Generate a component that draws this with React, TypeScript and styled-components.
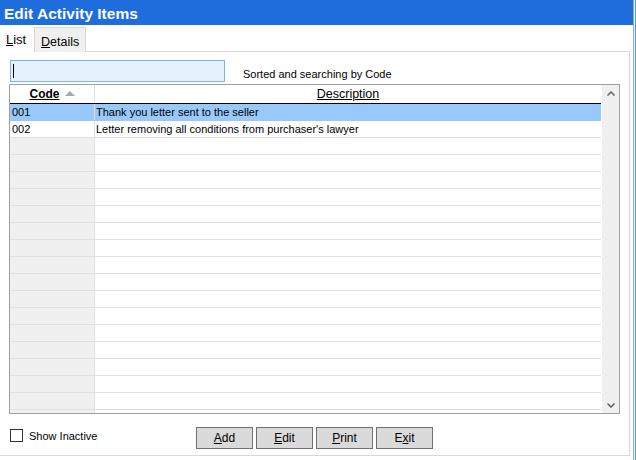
import React from "react";
import styled, { createGlobalStyle } from "styled-components";

type Item = { code: string; description: string };

const items: Item[] = [
  { code: "001", description: "Thank you letter sent to the seller" },
  { code: "002", description: "Letter removing all conditions from purchaser's lawyer" },
];

const TOTAL_ROWS = 19;

const Global = createGlobalStyle`
  html, body { margin: 0; padding: 0; background: #fff; }
  body { width: 636px; height: 460px; overflow: hidden; font-family: "Liberation Sans", Arial, sans-serif; }
`;

const Window = styled.div` display: flex; width: 636px; height: 460px; `;
const Main = styled.div` width: 633px; display: flex; flex-direction: column; `;
const Edge = styled.div`
  width: 3px; background: linear-gradient(to right, #a8a8a8 0, #a8a8a8 1px, #e8f4fc 1px, #e8f4fc 2px, #3aa6ee 2px);
`;

const TitleBar = styled.div`
  height: 25px; background: #1f6cdc; color: #fff; font-weight: bold; font-size: 15.5px;
  line-height: 27px; padding-left: 4px; white-space: nowrap;
`;

const Tabs = styled.div` display: flex; align-items: flex-end; height: 27px; width: 630px; `;
const Tab = styled.div<{ $active?: boolean }>`
  box-sizing: border-box;
  width: ${(p) => (p.$active ? "34px" : "52px")};
  height: ${(p) => (p.$active ? "27px" : "25px")};
  padding: ${(p) => (p.$active ? "7px 0 0 6px" : "7px 0 0 6px")};
  font-size: ${(p) => (p.$active ? "13px" : "12.5px")};
  background: ${(p) => (p.$active ? "#fff" : "#f0f0f0")};
  border: ${(p) => (p.$active ? "none" : "1px solid #d9d9d9")};
  border-bottom: none;
  color: #000;
  & u { text-decoration: underline; }
`;
const TabRest = styled.div` flex: 1; border-bottom: 1px solid #d9d9d9; `;

const Panel = styled.div`
  width: 630px; box-sizing: border-box; height: 404px;
  border-right: 1px solid #d9d9d9; border-bottom: 1px solid #d9d9d9;
  padding: 8px 9px 0 9px; display: flex; flex-direction: column;
`;

const SearchRow = styled.div` display: flex; align-items: flex-start; height: 24px; `;
const Search = styled.div`
  box-sizing: border-box; width: 215px; height: 22px; margin-left: 1px;
  background: #e5f1fb; border: 1px solid #7ab4ec; display: flex; align-items: center; padding-left: 2px;
`;
const Caret = styled.div` width: 1px; height: 14px; background: #000; `;
const SortedLabel = styled.div` font-size: 11px; margin: 8px 0 0 18px; color: #000; `;

const Grid = styled.div`
  box-sizing: border-box; height: 330px; border: 1px solid #a0a0a0; display: flex;
`;
const Body = styled.div` flex: 1; overflow: hidden; display: flex; flex-direction: column; `;
const HeaderRow = styled.div` display: flex; height: 18px; border-bottom: 1px solid #000; flex-shrink: 0; `;
const HeadCell = styled.div<{ $w?: number }>`
  ${(p) => (p.$w ? `width: ${p.$w}px; border-right: 1px solid #e0e0e0;` : "flex: 1;")}
  display: flex; align-items: center; justify-content: center; font-size: 12.5px; color: #000;
`;
const HeadText = styled.span<{ $bold?: boolean }>`
  text-decoration: underline; font-weight: ${(p) => (p.$bold ? "bold" : "normal")};
  font-size: ${(p) => (p.$bold ? "12px" : "12.5px")};
`;
const SortArrow = styled.span`
  width: 0; height: 0; margin-left: 5px; margin-top: -1px;
  border-left: 5px solid transparent; border-right: 5px solid transparent; border-bottom: 5px solid #a8a8a8;
`;

const Row = styled.div<{ $selected?: boolean }>`
  display: flex; height: 17px; box-sizing: border-box; flex-shrink: 0;
  border-bottom: 1px solid ${(p) => (p.$selected ? "#99c9fb" : "#e0e0e0")};
  background: ${(p) => (p.$selected ? "#99c9fb" : "#fff")};
  font-size: 11px; color: #000;
`;
const CodeCell = styled.div<{ $empty?: boolean; $selected?: boolean }>`
  width: 82px; padding-left: 2px; border-right: 1px solid #e0e0e0; line-height: 16px;
  background: ${(p) => (p.$selected ? "transparent" : p.$empty ? "#f0f0f0" : "#fff")};
`;
const DescCell = styled.div` flex: 1; padding-left: 1px; line-height: 16px; white-space: nowrap; `;

const Scrollbar = styled.div`
  width: 17px; background: #f0f0f0; border-left: 1px solid #fff; display: flex; flex-direction: column;
  justify-content: space-between; align-items: center; padding: 6px 0 5px;
`;

const Footer = styled.div`
  display: grid; grid-template-columns: 1fr auto 1fr; align-items: start; margin-top: 13px;
`;
const CheckWrap = styled.label` display: flex; align-items: center; font-size: 11px; padding-top: 2px; `;
const Box = styled.span`
  width: 11px; height: 11px; border: 1px solid #333; background: #fff; margin: 0 6px 0 1px;
`;
const Buttons = styled.div` display: flex; gap: 3px; `;
const Button = styled.button`
  box-sizing: border-box; width: 57px; height: 22px; background: #dadada; border: 1px solid #707070;
  font-family: "Liberation Sans", Arial, sans-serif; font-size: 12px; color: #000; padding: 0;
`;

function Chevron({ up }: { up?: boolean }) {
  return (
    <svg width="8" height="5" viewBox="0 0 8 5">
      <path d={up ? "M0.5 4.5 L4 1 L7.5 4.5" : "M0.5 0.5 L4 4 L7.5 0.5"} fill="none" stroke="#606060" strokeWidth="1.5" />
    </svg>
  );
}

function Accel({ text, at }: { text: string; at: number }) {
  return (
    <>
      {text.slice(0, at)}
      <u>{text[at]}</u>
      {text.slice(at + 1)}
    </>
  );
}

export default function App() {
  const rows = Array.from({ length: TOTAL_ROWS }, (_, i) => items[i] || null);
  return (
    <Window>
      <Global />
      <Main>
        <TitleBar>Edit Activity Items</TitleBar>
        <Tabs>
          <Tab $active><Accel text="List" at={0} /></Tab>
          <Tab><Accel text="Details" at={0} /></Tab>
          <TabRest />
        </Tabs>
        <Panel>
          <SearchRow>
            <Search><Caret /></Search>
            <SortedLabel>Sorted and searching by Code</SortedLabel>
          </SearchRow>
          <Grid>
            <Body>
              <HeaderRow>
                <HeadCell $w={84}><HeadText $bold>Code</HeadText><SortArrow /></HeadCell>
                <HeadCell><HeadText>Description</HeadText></HeadCell>
              </HeaderRow>
              {rows.map((r, i) => (
                <Row key={i} $selected={i === 0}>
                  <CodeCell $empty={!r} $selected={i === 0}>{r?.code}</CodeCell>
                  <DescCell>{r?.description}</DescCell>
                </Row>
              ))}
            </Body>
            <Scrollbar>
              <Chevron up />
              <Chevron />
            </Scrollbar>
          </Grid>
          <Footer>
            <CheckWrap><Box />Show Inactive</CheckWrap>
            <Buttons>
              <Button><Accel text="Add" at={0} /></Button>
              <Button><Accel text="Edit" at={0} /></Button>
              <Button><Accel text="Print" at={0} /></Button>
              <Button><Accel text="Exit" at={1} /></Button>
            </Buttons>
            <div />
          </Footer>
        </Panel>
      </Main>
      <Edge />
    </Window>
  );
}
